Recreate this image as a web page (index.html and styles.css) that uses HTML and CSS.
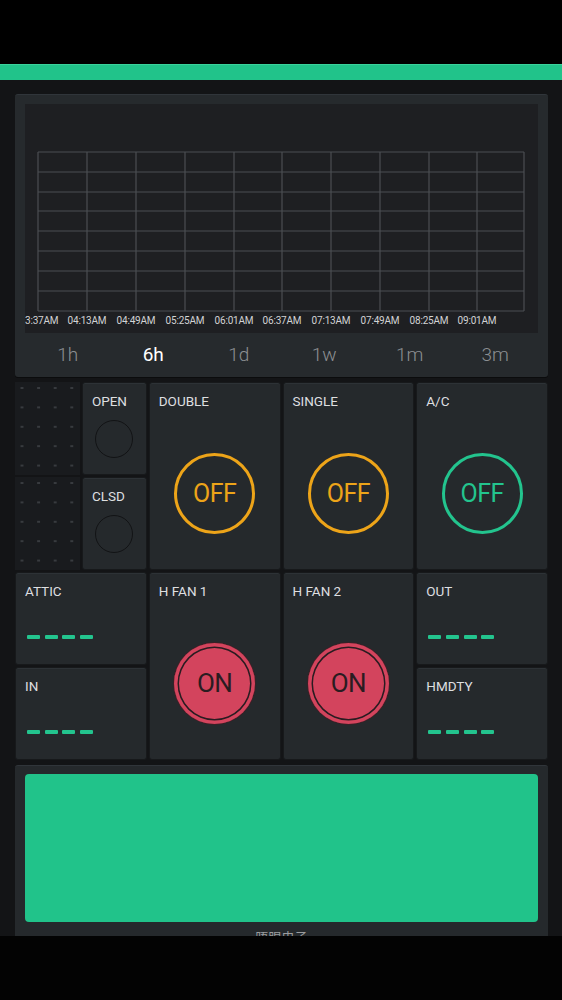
FILE: index.html
```html
<!DOCTYPE html>
<html lang="en">
<head>
<meta charset="utf-8">
<title>Dashboard</title>
<link rel="stylesheet" href="styles.css">
</head>
<body>
<div class="statusbar"></div>
<div class="appbar"></div>
<main class="content">
  <section class="chart-panel">
    <div class="chart">
      <svg class="chart-svg" width="513" height="229" viewBox="0 0 513 229">
        <g class="grid-lines">
          <line x1="13" y1="48" x2="13" y2="207"/>
          <line x1="62" y1="48" x2="62" y2="207"/>
          <line x1="111" y1="48" x2="111" y2="207"/>
          <line x1="160" y1="48" x2="160" y2="207"/>
          <line x1="209" y1="48" x2="209" y2="207"/>
          <line x1="257" y1="48" x2="257" y2="207"/>
          <line x1="306" y1="48" x2="306" y2="207"/>
          <line x1="355" y1="48" x2="355" y2="207"/>
          <line x1="404" y1="48" x2="404" y2="207"/>
          <line x1="452" y1="48" x2="452" y2="207"/>
          <line x1="499" y1="48" x2="499" y2="207"/>
          <line x1="13" y1="48" x2="499" y2="48"/>
          <line x1="13" y1="68" x2="499" y2="68"/>
          <line x1="13" y1="88" x2="499" y2="88"/>
          <line x1="13" y1="107" x2="499" y2="107"/>
          <line x1="13" y1="127" x2="499" y2="127"/>
          <line x1="13" y1="147" x2="499" y2="147"/>
          <line x1="13" y1="167" x2="499" y2="167"/>
          <line x1="13" y1="187" x2="499" y2="187"/>
          <line x1="13" y1="207" x2="499" y2="207"/>
        </g>
        <g class="axis-labels">
          <text class="first" x="0" y="220">3:37AM</text>
          <text x="62" y="220">04:13AM</text>
          <text x="111" y="220">04:49AM</text>
          <text x="160" y="220">05:25AM</text>
          <text x="209" y="220">06:01AM</text>
          <text x="257" y="220">06:37AM</text>
          <text x="306" y="220">07:13AM</text>
          <text x="355" y="220">07:49AM</text>
          <text x="404" y="220">08:25AM</text>
          <text x="452" y="220">09:01AM</text>
        </g>
      </svg>
    </div>
    <nav class="ranges">
      <span class="range">1h</span>
      <span class="range active">6h</span>
      <span class="range">1d</span>
      <span class="range">1w</span>
      <span class="range">1m</span>
      <span class="range">3m</span>
    </nav>
  </section>

  <section class="widgets">
    <div class="empty-cell r1"></div>
    <div class="empty-cell r2"></div>

    <div class="widget led-widget c2 r1">
      <span class="label">OPEN</span>
      <div class="led-wrap"><span class="led"></span></div>
    </div>
    <div class="widget led-widget c2 r2">
      <span class="label">CLSD</span>
      <div class="led-wrap"><span class="led"></span></div>
    </div>

    <div class="widget button-widget c3 r12">
      <span class="label">DOUBLE</span>
      <div class="btn-wrap"><span class="btn-off orange">OFF</span></div>
    </div>
    <div class="widget button-widget c5 r12">
      <span class="label">SINGLE</span>
      <div class="btn-wrap"><span class="btn-off orange">OFF</span></div>
    </div>
    <div class="widget button-widget c7 r12">
      <span class="label">A/C</span>
      <div class="btn-wrap"><span class="btn-off green">OFF</span></div>
    </div>

    <div class="widget value-widget c1 r3">
      <span class="label">ATTIC</span>
      <div class="dashes"><i></i><i></i><i></i><i></i></div>
    </div>
    <div class="widget value-widget c1 r4">
      <span class="label">IN</span>
      <div class="dashes"><i></i><i></i><i></i><i></i></div>
    </div>

    <div class="widget button-widget c3 r34">
      <span class="label">H FAN 1</span>
      <div class="btn-wrap"><span class="btn-on">ON</span></div>
    </div>
    <div class="widget button-widget c5 r34">
      <span class="label">H FAN 2</span>
      <div class="btn-wrap"><span class="btn-on">ON</span></div>
    </div>

    <div class="widget value-widget c7 r3">
      <span class="label">OUT</span>
      <div class="dashes"><i></i><i></i><i></i><i></i></div>
    </div>
    <div class="widget value-widget c7 r4">
      <span class="label">HMDTY</span>
      <div class="dashes"><i></i><i></i><i></i><i></i></div>
    </div>
  </section>

  <section class="big-panel">
    <div class="big-button"></div>
    <span class="big-label">晤眼电子</span>
  </section>
</main>
<div class="navbar"></div>
</body>
</html>
```

FILE: styles.css
```css
* {
  box-sizing: border-box;
}

html, body {
  margin: 0;
  padding: 0;
  background: #000;
}

body {
  width: 562px;
  height: 1000px;
  overflow: hidden;
  font-family: Roboto, "Noto Sans", "Noto Sans CJK SC", sans-serif;
  color: #dcdddd;
}

.statusbar {
  height: 64px;
  background: #000;
}

.appbar {
  height: 16px;
  background: #21c38a;
  border-top: 1px solid #3ad39c;
}

.content {
  height: 856px;
  overflow: hidden;
  background: #131416;
  padding: 14px 14px 0 15px;
  display: flex;
  flex-direction: column;
}

.content > section {
  flex-shrink: 0;
}

/* ---------- chart panel ---------- */
.chart-panel {
  background: #262a2d;
  border-radius: 3px;
  border-top: 1px solid #30353a;
  padding: 9px 10px 0 10px;
  height: 283px;
  box-shadow: 0 1px 0 #0b0c0d;
  display: flex;
  flex-direction: column;
}

.chart {
  height: 229px;
  flex-shrink: 0;
  background: #1e1f22;
  overflow: hidden;
}

.chart-svg {
  display: block;
}

.grid-lines line {
  stroke: #4b4e52;
  stroke-width: 1.2;
}

.axis-labels text {
  font-family: Roboto, sans-serif;
  font-size: 10px;
  fill: #d2d3d4;
  text-anchor: middle;
  letter-spacing: -0.2px;
}

.axis-labels text.first {
  text-anchor: start;
}

.ranges {
  flex: 1;
  display: flex;
  align-items: center;
}

.range {
  flex: 1;
  text-align: center;
  font-size: 19px;
  font-weight: 300;
  color: #8c8f92;
  padding-bottom: 2px;
}

.range.active {
  color: #ffffff;
  font-weight: 400;
}

/* ---------- widget grid ---------- */
.widgets {
  margin-top: 5px;
  display: grid;
  grid-template-columns: repeat(8, 1fr);
  grid-template-rows: repeat(4, 92.5px);
  column-gap: 2px;
  row-gap: 2.5px;
}

.empty-cell {
  grid-column: 1;
  background-color: #191b1e;
  background-image: radial-gradient(circle, #383b3f 0 1.1px, transparent 1.4px);
  background-size: 16.6px 19.4px;
  background-position: -1.3px -3.7px;
}

.r1 { grid-row: 1; }
.r2 { grid-row: 2; }
.r3 { grid-row: 3; }
.r4 { grid-row: 4; }
.r12 { grid-row: 1 / span 2; }
.r34 { grid-row: 3 / span 2; }
.c1 { grid-column: 1 / span 2; }
.c2 { grid-column: 2; }
.c3 { grid-column: 3 / span 2; }
.c5 { grid-column: 5 / span 2; }
.c7 { grid-column: 7 / span 2; }

.widget {
  background: #25292c;
  border-radius: 3px;
  border: 1px solid #17191b;
  box-shadow: inset 0 1px 0 #2d3236;
  display: flex;
  flex-direction: column;
  padding: 10px 9px 0 9px;
  min-width: 0;
}

.label {
  font-size: 13.5px;
  line-height: 16px;
  color: #dedfe0;
  white-space: nowrap;
}

/* led */
.led-wrap {
  display: flex;
  justify-content: center;
  padding-top: 11px;
}

.led {
  width: 38px;
  height: 38px;
  border-radius: 50%;
  border: 1.5px solid #121315;
}

/* buttons */
.btn-wrap {
  flex: 1;
  display: flex;
  align-items: center;
  justify-content: center;
  padding-top: 9px;
}

.btn-off,
.btn-on {
  width: 81px;
  height: 81px;
  border-radius: 50%;
  display: flex;
  align-items: center;
  justify-content: center;
  font-size: 25px;
  font-weight: 400;
  letter-spacing: -0.5px;
}

.btn-off {
  border: 3px solid currentColor;
}

.btn-off.orange {
  color: #eda419;
}

.btn-off.green {
  color: #23c48e;
}

.btn-on {
  background: #d3445d;
  color: #2a1c21;
  font-size: 26px;
  box-shadow:
    0 0 0 1px #3b2026,
    inset 0 0 0 3.5px #d3445d,
    inset 0 0 0 5px #2a1c21;
}

/* values */
.dashes {
  display: flex;
  gap: 4.7px;
  padding-left: 2px;
  margin-top: 36px;
}

.dashes i {
  display: block;
  width: 13px;
  height: 4px;
  border-radius: 1px;
  background: #23c48e;
}

/* ---------- big button panel ---------- */
.big-panel {
  margin-top: 5.5px;
  background: #25292c;
  border-radius: 3px;
  border-top: 1px solid #30353a;
  padding: 8px 10px 0 10px;
  display: flex;
  flex-direction: column;
  align-items: stretch;
  height: 200px;
}

.big-button {
  height: 148px;
  flex-shrink: 0;
  background: #21c38a;
  border-radius: 4px;
}

.big-label {
  margin-top: 5px;
  text-align: center;
  font-size: 13px;
  color: #9a9c9e;
  font-family: "Noto Sans CJK SC", sans-serif;
}

.navbar {
  height: 64px;
  background: #030303;
}
```
